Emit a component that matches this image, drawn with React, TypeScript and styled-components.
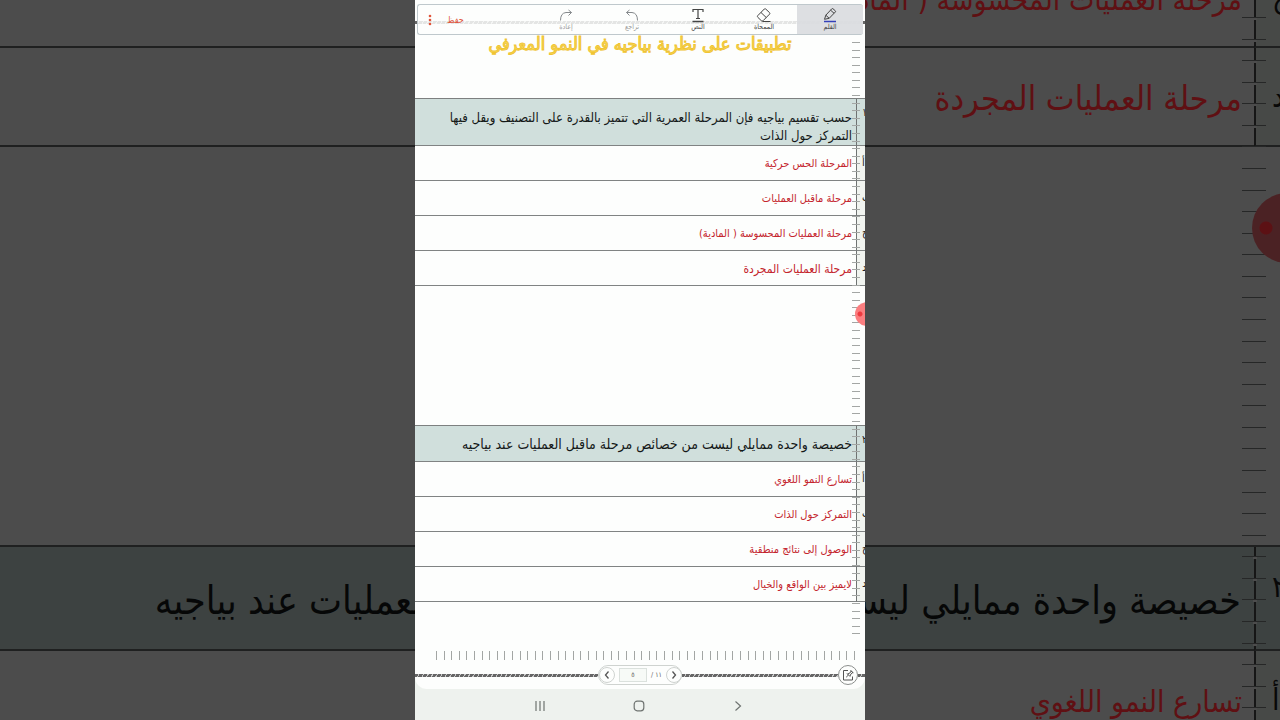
import React from "react";
import styled, { createGlobalStyle, css } from "styled-components";

const GlobalStyle = createGlobalStyle`
  * { box-sizing: border-box; }
  body { margin: 0; background: #4c4c4c; }
  button, input { font: inherit; color: inherit; margin: 0; padding: 0; border: 0; background: none; }
  button { cursor: pointer; }
`;

const font = `"DejaVu Sans Condensed", "DejaVu Sans", sans-serif`;

const rope = css`
  background: repeating-linear-gradient(120deg, #666 0 3px, #c8c8c8 3px 4px);
`;

const Stage = styled.main`
  position: relative;
  min-height: 100vh;
  display: flex;
  justify-content: center;
  overflow: hidden;
  font-family: ${font};
`;

const Backdrop = styled.div`
  position: absolute;
  inset: 0;
  overflow: hidden;
  background: #4c4c4c;
`;

const BackdropPage = styled.div`
  margin-top: -53px;
`;

const Phone = styled.section`
  position: relative;
  width: 450px;
  max-width: 100%;
  min-height: 100vh;
  display: flex;
  flex-direction: column;
  overflow: hidden;
  background: #eef2ee;
`;

const Sheet = styled.div`
  position: relative;
  background: #fdfefd;
  border-radius: 0 0 12px 12px;
  overflow: hidden;
`;

const TopBar = styled.header`
  position: relative;
  padding: 4px 2px 0;
  &::before {
    content: "";
    position: absolute;
    inset: 21px 0 auto;
    height: 3px;
    ${rope}
  }
`;

const Toolbar = styled.div`
  position: relative;
  height: 31px;
  display: flex;
  border: solid #bfc8cc;
  border-width: 1px 0 1px 1px;
  border-radius: 3px;
  background: rgba(253, 254, 253, 0.84);
`;

const Tool = styled.button<{ $active?: boolean; $muted?: boolean }>`
  width: 66px;
  display: flex;
  flex-direction: column;
  align-items: center;
  padding-top: 3px;
  font-size: 7px;
  line-height: 8px;
  color: ${(p) => (p.$muted ? "#9a9a9a" : "#444")};
  background: ${(p) => (p.$active ? "rgba(217, 220, 223, 0.9)" : "none")};
  svg { display: block; }
`;

const ToolbarSpacer = styled.div`
  flex: 1;
`;

const SaveButton = styled.button`
  font-size: 9px;
  color: #e0553c;
  padding-left: 5px;
`;

const MoreButton = styled.button`
  width: 24px;
  display: grid;
  place-items: center;
`;

const Title = styled.h1`
  margin: 0 0 45px;
  font-size: 18px;
  line-height: 18px;
  font-weight: 400;
  text-align: center;
  white-space: nowrap;
  color: #f9dc5c;
  -webkit-text-stroke: 1px #f0c434;
`;

const QuizTable = styled.table<{ $large?: boolean; $gap?: number }>`
  width: 100%;
  table-layout: fixed;
  border-spacing: 0;
  margin-top: ${(p) => p.$gap ?? 0}px;
  border-top: ${(p) => (p.$large ? "2px solid #1f2020" : "1px solid #7d8080")};
`;

const cell = css<{ $large?: boolean }>`
  padding: 0;
  font-weight: 400;
  text-align: right;
  border-bottom: ${(p) => (p.$large ? "2px solid #1f2020" : "1px solid #808383")};
`;

const Index = styled.th<{ $large?: boolean; $head?: boolean }>`
  ${cell}
  width: ${(p) => (p.$large ? 26 : 9)}px;
  border-left: ${(p) => (p.$large ? "2px solid #161616" : "1px solid #6f7372")};
  vertical-align: ${(p) => (p.$head ? "top" : "middle")};
  padding-top: ${(p) => (p.$head ? (p.$large ? 14 : 5) : 0)}px;
  background: ${(p) =>
    p.$head ? (p.$large ? "#3d4241" : "#d0dfdc") : p.$large ? "#474947" : "#f1f4f0"};
  color: ${(p) => (p.$large ? "#080808" : "#222")};
`;

const IndexText = styled.div<{ $large?: boolean }>`
  direction: ltr;
  text-align: left;
  overflow: hidden;
  white-space: nowrap;
  padding-left: ${(p) => (p.$large ? 16 : 5)}px;
  font-size: ${(p) => (p.$large ? 30 : 11)}px;
  line-height: ${(p) => (p.$large ? 51 : 18)}px;
`;

const Question = styled.th<{ $large?: boolean; $height: number; $pad: number; $size: number }>`
  ${cell}
  height: ${(p) => p.$height}px;
  padding-right: ${(p) => (p.$large ? 13 : 4)}px;
  padding-top: ${(p) => p.$pad}px;
  font-size: ${(p) => p.$size}px;
  line-height: ${(p) => (p.$large ? 51 : 18)}px;
  white-space: nowrap;
  background: ${(p) => (p.$large ? "#3d4241" : "#d0dfdc")};
  color: ${(p) => (p.$large ? "#060707" : "#141818")};
`;

const Option = styled.td<{ $large?: boolean; $strong?: boolean }>`
  ${cell}
  height: ${(p) => (p.$large ? 99 : 35)}px;
  padding-right: ${(p) => (p.$large ? 12 : 4)}px;
  padding-top: ${(p) => (p.$large ? 4 : 1)}px;
  font-size: ${(p) => (p.$large ? (p.$strong ? 34 : 30) : p.$strong ? 12 : 11)}px;
  line-height: ${(p) => (p.$large ? 51 : 18)}px;
  white-space: nowrap;
  color: ${(p) => (p.$large ? "#5f1013" : "#c4252d")};
`;

const SideTicks = styled.svg<{ $right: number }>`
  position: absolute;
  top: 0;
  right: ${(p) => p.$right}px;
  pointer-events: none;
`;

const Bubble = styled.button<{ $large?: boolean }>`
  position: absolute;
  right: ${(p) => (p.$large ? -42 : -14)}px;
  top: ${(p) => (p.$large ? 193 : 302)}px;
  width: ${(p) => (p.$large ? 70 : 24)}px;
  height: ${(p) => (p.$large ? 70 : 24)}px;
  border-radius: 50%;
  background: ${(p) =>
    p.$large
      ? "radial-gradient(circle at 14px 35px, #5c1114 6px, #4b2224 7px)"
      : "radial-gradient(circle at 5px 12px, #ee3a3f 2px, #fb7e80 3px)"};
`;

const BottomTicks = styled.svg`
  display: block;
  margin: 49px 0 5px;
`;

const Footer = styled.footer`
  display: flex;
  align-items: center;
  padding-bottom: 4px;
`;

const Rope = styled.div<{ $width?: number }>`
  height: 3px;
  ${(p) => (p.$width ? `width: ${p.$width}px;` : "flex: 1;")}
  ${rope}
`;

const Pager = styled.nav`
  direction: ltr;
  display: flex;
  align-items: center;
  gap: 4px;
  width: 84px;
  height: 20px;
  border: 1px solid #cfd3d0;
  border-radius: 10px;
  font-size: 7px;
  color: #666;
`;

const RoundButton = styled.button<{ $size: number }>`
  flex: none;
  display: grid;
  place-items: center;
  width: ${(p) => p.$size}px;
  height: ${(p) => p.$size}px;
  border: 1px solid ${(p) => (p.$size > 16 ? "#8c8f8d" : "#cfd3d0")};
  border-radius: 50%;
  background: #fdfefd;
`;

const PageInput = styled.input`
  width: 28px;
  height: 14px;
  border: 1px solid #dbe1dd;
  background: #f7faf7;
  text-align: center;
`;

const PageTotal = styled.span`
  flex: 1;
  white-space: nowrap;
`;

const SystemNav = styled.nav`
  flex: 1;
  direction: ltr;
  display: flex;
  justify-content: center;
  align-items: center;
  min-height: 31px;
  padding: 2px 2px 0 0;
`;

const SystemButton = styled.button`
  width: 99px;
  display: grid;
  place-items: center;
`;

type Choice = { mark: string; text: string; strong?: boolean };
type Quiz = {
  mark: string;
  lines: string[];
  height: number;
  pad: number;
  size: number;
  choices: Choice[];
};

const first: Quiz = {
  mark: "١",
  lines: [
    "حسب تقسيم بياجيه فإن المرحلة العمرية التي تتميز بالقدرة على التصنيف ويقل فيها",
    "التمركز حول الذات",
  ],
  height: 47,
  pad: 10,
  size: 13,
  choices: [
    { mark: "أ", text: "المرحلة الحس حركية" },
    { mark: "ب", text: "مرحلة ماقبل العمليات" },
    { mark: "ج", text: "مرحلة العمليات المحسوسة ( المادية)" },
    { mark: "د", text: "مرحلة العمليات المجردة", strong: true },
  ],
};

const second: Quiz = {
  mark: "٢",
  lines: ["خصيصة واحدة ممايلي ليست من خصائص مرحلة ماقبل العمليات عند بياجيه"],
  height: 36,
  pad: 0,
  size: 14,
  choices: [
    { mark: "أ", text: "تسارع النمو اللغوي" },
    { mark: "ب", text: "التمركز حول الذات" },
    { mark: "ج", text: "الوصول إلى نتائج منطقية" },
    { mark: "د", text: "لايميز بين الواقع والخيال" },
  ],
};

function ChoiceRow({ choice, large }: { choice: Choice; large?: boolean }) {
  return (
    <tr>
      <Index scope="row" $large={large}>
        <IndexText $large={large}>{choice.mark}</IndexText>
      </Index>
      <Option $large={large} $strong={choice.strong}>{choice.text}</Option>
    </tr>
  );
}

function QuestionRow({ quiz, large }: { quiz: Quiz; large?: boolean }) {
  return (
    <tr>
      <Index scope="col" $large={large} $head>
        <IndexText $large={large}>{quiz.mark}</IndexText>
      </Index>
      <Question
        scope="col"
        $large={large}
        $height={large ? 104 : quiz.height}
        $pad={large ? 4 : quiz.pad}
        $size={large ? 39 : quiz.size}
      >
        {quiz.lines.map((line) => (
          <div key={line}>{line}</div>
        ))}
      </Question>
    </tr>
  );
}

function QuizBlock({ quiz, gap }: { quiz: Quiz; gap?: number }) {
  return (
    <QuizTable $gap={gap}>
      <thead>
        <QuestionRow quiz={quiz} />
      </thead>
      <tbody>
        {quiz.choices.map((c) => (
          <ChoiceRow key={c.mark} choice={c} />
        ))}
      </tbody>
    </QuizTable>
  );
}

function tickPositions(start: number, step: number, count: number) {
  return Array.from({ length: count }, (_, i) => Math.round(start + i * step));
}

function BackdropView() {
  return (
    <Backdrop aria-hidden="true">
      <BackdropPage>
        <QuizTable $large>
          <tbody>
            <ChoiceRow choice={first.choices[2]} large />
            <ChoiceRow choice={first.choices[3]} large />
          </tbody>
        </QuizTable>
        <QuizTable $large $gap={398}>
          <thead>
            <QuestionRow quiz={second} large />
          </thead>
          <tbody>
            <ChoiceRow choice={second.choices[0]} large />
          </tbody>
        </QuizTable>
      </BackdropPage>
      <SideTicks $right={14} width="24" height="720">
        {tickPositions(17, 21.57, 33).map((y) => (
          <g key={y}>
            <rect x="0" y={y} width="24" height="1" fill="#262727" />
            <rect x="11" y={y + 1} width="4" height="2" fill="#4c4c4c" />
          </g>
        ))}
      </SideTicks>
      <Bubble as="div" $large />
    </Backdrop>
  );
}

function SystemBar() {
  return (
    <SystemNav aria-label="النظام">
      <SystemButton aria-label="التطبيقات الأخيرة">
        <svg width="12" height="12" fill="none" stroke="#6f7471" strokeWidth="1.2">
          <path d="M2 1v10M6 1v10M10 1v10" />
        </svg>
      </SystemButton>
      <SystemButton aria-label="الرئيسية">
        <svg width="12" height="12" fill="none" stroke="#6f7471" strokeWidth="1.2">
          <rect x="1.2" y="1.2" width="9.6" height="9.6" rx="3" />
        </svg>
      </SystemButton>
      <SystemButton aria-label="رجوع">
        <svg width="12" height="12" fill="none" stroke="#6f7471" strokeWidth="1.2">
          <path d="M3.5 1.5 8.5 6l-5 4.5" />
        </svg>
      </SystemButton>
    </SystemNav>
  );
}

export default function App() {
  return (
    <Stage dir="rtl" lang="ar">
      <GlobalStyle />
      <BackdropView />
      <Phone>
        <Sheet>
          <TopBar>
            <Toolbar>
              <Tool $active>
                <svg width="16" height="15" viewBox="0 0 16 15" fill="none" stroke="#444" strokeWidth="1">
                  <path d="M2.5 11.3 3.8 7.2 9.8.8q.6-.5 1.2 0l2.3 2q.6.6 0 1.2L7.2 10.3ZM3.8 7.2l3.4 3.1M8.6 2.2l3.5 3.1" />
                  <path d="M2 13.5h12" stroke="#3440b8" strokeWidth="1.5" />
                </svg>
                القلم
              </Tool>
              <Tool>
                <svg width="16" height="15" viewBox="0 0 16 15" fill="none" stroke="#444" strokeWidth="1">
                  <path d="M1.8 7.6 8.3 1q.7-.6 1.4 0l3.9 3.7q.6.7 0 1.4L7.1 12.7Q6.2 13.4 5.3 12.7L1.8 9.3Q1 8.5 1.8 7.6ZM5 4.5l5.2 5M6.5 13.5h8" />
                </svg>
                الممحاة
              </Tool>
              <Tool>
                <svg width="16" height="15" viewBox="0 0 16 15" fill="none" stroke="#444" strokeWidth="1.2">
                  <path d="M3 4V1.5h10V4M8 1.5V10.5M6 10.5h4" />
                  <path d="M2.5 13.5h11" strokeWidth="1.5" />
                </svg>
                النص
              </Tool>
              <Tool $muted>
                <svg width="16" height="15" viewBox="0 0 16 15" fill="none" stroke="#85898c" strokeWidth="1">
                  <path d="M5.5 2 2.5 4.5l3 3M2.5 4.5H8Q13.5 5 13.5 12.5" />
                </svg>
                تراجع
              </Tool>
              <Tool $muted>
                <svg width="16" height="15" viewBox="0 0 16 15" fill="none" stroke="#85898c" strokeWidth="1">
                  <path d="m10.5 2 3 2.5-3 3M13.5 4.5H8Q2.5 5 2.5 12.5" />
                </svg>
                إعادة
              </Tool>
              <ToolbarSpacer />
              <SaveButton>حفظ</SaveButton>
              <MoreButton aria-label="المزيد">
                <svg width="4" height="12" fill="#e0553c">
                  <circle cx="2" cy="2" r="1.3" />
                  <circle cx="2" cy="6" r="1.3" />
                  <circle cx="2" cy="10" r="1.3" />
                </svg>
              </MoreButton>
            </Toolbar>
          </TopBar>
          <Title>تطبيقات على نظرية بياجيه في النمو المعرفي</Title>
          <QuizBlock quiz={first} />
          <QuizBlock quiz={second} gap={139} />
          <BottomTicks width="450" height="9">
            {tickPositions(21, 7.6, 56).map((x) => (
              <rect key={x} x={x} y="0" width="1" height="9" fill="#a3a6a4" />
            ))}
          </BottomTicks>
          <Footer>
            <Rope $width={7} />
            <RoundButton $size={20} aria-label="ملاحظة">
              <svg width="12" height="12" viewBox="0 0 12 12" fill="none" stroke="#555" strokeWidth="1">
                <path d="M6 1.5H1.5v9.500h9V7.500M4.200 8.200l2.200-2.200M5 4.500l3 3M5.500 5l2.200-.8L9.200 2l1.600 1.600-2 1.500L8 7.200M8.500 1.200l3 3" />
              </svg>
            </RoundButton>
            <Rope />
            <Pager aria-label="الصفحات">
              <RoundButton $size={16} aria-label="السابق">
                <svg width="8" height="10" fill="none" stroke="#555" strokeWidth="1.3">
                  <path d="M5.5 1.5 2.5 5l3 3.5" />
                </svg>
              </RoundButton>
              <PageInput aria-label="رقم الصفحة" defaultValue="٥" />
              <PageTotal>/ ١١</PageTotal>
              <RoundButton $size={16} aria-label="التالي">
                <svg width="8" height="10" fill="none" stroke="#555" strokeWidth="1.3">
                  <path d="m2.5 1.5 3 3.5-3 3.5" />
                </svg>
              </RoundButton>
            </Pager>
            <Rope $width={183} />
          </Footer>
          <SideTicks $right={5} width="8" height="640">
            {tickPositions(42, 7.58, 79).map((y) => (
              <rect key={y} x="0" y={y} width="8" height="1" fill="#a3a6a4" />
            ))}
          </SideTicks>
        </Sheet>
        <SystemBar />
        <Bubble aria-label="تسجيل" />
      </Phone>
    </Stage>
  );
}
